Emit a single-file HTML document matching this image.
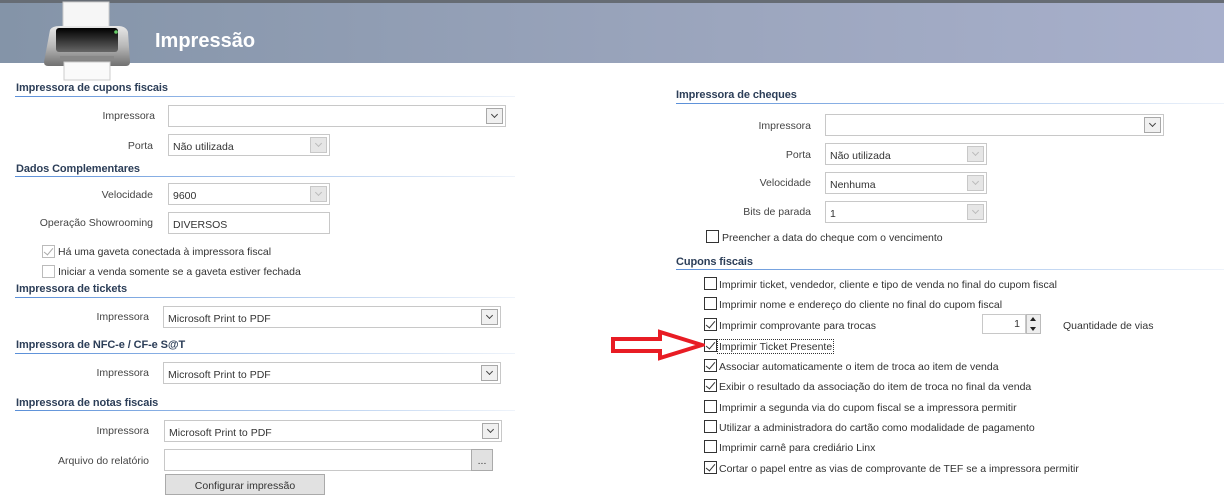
<!DOCTYPE html>
<html><head><meta charset="utf-8"><style>
*{margin:0;padding:0;box-sizing:border-box}
body{width:1224px;height:503px;overflow:hidden;background:#fff;position:relative;font-family:"Liberation Sans",sans-serif;font-size:10.5px;color:#333}
.a{position:absolute;white-space:nowrap}
.hdr{position:absolute;left:0;top:0;width:1224px;height:63px;background:linear-gradient(90deg,#8494a8,#9ca6be 60%,#a8b0cc);border-top:3px solid #666c74}
.title{position:absolute;left:155px;top:30px;color:#fff;font-weight:bold;font-size:20px}
.sec{position:absolute;font-weight:bold;font-size:11px;color:#2c3e58;letter-spacing:-.1px}
.line{position:absolute;height:1px;background:linear-gradient(90deg,#5a8fd8,#b8d0f0 60%,#eef3fa)}
.lbl{position:absolute;text-align:right;color:#444;margin-top:1px}
.sel{position:absolute;border:1px solid #c8c8c8;background:#fff;height:22px;padding:6px 0 0 4px;color:#333}
.sel i{position:absolute;right:2px;top:2px;width:17px;height:16px;border:1px solid #a8a8a8;background:#f0f0f0}
.sel i:after{content:"";position:absolute;left:5px;top:3px;width:4px;height:4px;border-right:1px solid #444;border-bottom:1px solid #444;transform:rotate(45deg)}
.sel.d i{background:#e6e6e6;border-color:#c8c8c8}
.sel.d i:after{border-color:#bbb}
.cb{position:absolute;width:13px;height:13px;border:1px solid #333;background:#fff}
.cb.c:after{content:"";position:absolute;left:3px;top:0px;width:4px;height:8px;border-right:1.5px solid #333;border-bottom:1.5px solid #333;transform:rotate(40deg)}
.cb.g{border-color:#bbb}.cb.g:after{border-color:#aaa}
.btn{position:absolute;border:1px solid #aaa;background:#e1e1e1;text-align:center;padding-top:5px;color:#333}
.t{margin-top:1px}
</style></head><body>
<div class="hdr"></div>
<div class="title">Impressão</div>
<svg class="a" style="left:40px;top:0" width="95" height="82" viewBox="0 0 95 82">
<defs><linearGradient id="b" x1="0" y1="0" x2="0" y2="1"><stop offset="0" stop-color="#e8e8e8"/><stop offset=".5" stop-color="#b8b8b8"/><stop offset="1" stop-color="#707070"/></linearGradient>
<linearGradient id="s" x1="0" y1="0" x2="0" y2="1"><stop offset="0" stop-color="#000"/><stop offset="1" stop-color="#666"/></linearGradient></defs>
<rect x="23" y="2" width="46" height="30" fill="#f6f6f6" stroke="#ccc"/>
<path d="M10 30 Q12 26 20 26 L78 26 Q86 26 88 32 L90 62 Q90 66 86 66 L8 66 Q4 66 4 62 Z" fill="url(#b)"/>
<rect x="16" y="28" width="62" height="24" rx="3" fill="url(#s)"/>
<circle cx="76" cy="32" r="1.8" fill="#6c6"/>
<rect x="20" y="56" width="54" height="4" fill="#888"/>
<rect x="24" y="62" width="46" height="18" fill="#fafafa" stroke="#ccc"/>
</svg>

<div class="sec" style="left:16px;top:82px">Impressora de cupons fiscais</div><div class="line" style="left:15px;top:96px;width:500px"></div>
<div class="lbl" style="left:40px;top:109px;width:115px">Impressora</div><div class="sel" style="left:168px;top:105px;width:338px"><i></i></div>
<div class="lbl" style="left:40px;top:139px;width:113px">Porta</div><div class="sel d" style="left:168px;top:134px;width:162px">Não utilizada<i></i></div>
<div class="sec" style="left:16px;top:163px">Dados Complementares</div><div class="line" style="left:15px;top:176px;width:500px"></div>
<div class="lbl" style="left:40px;top:188px;width:113px">Velocidade</div><div class="sel d" style="left:168px;top:183px;width:162px">9600<i></i></div>
<div class="lbl" style="left:20px;top:216px;width:133px">Operação Showrooming</div><div class="sel" style="left:168px;top:212px;width:162px">DIVERSOS</div>
<div class="cb c g" style="left:42px;top:245px"></div><div class="a t" style="left:58px;top:245px">Há uma gaveta conectada à impressora fiscal</div>
<div class="cb g" style="left:42px;top:265px"></div><div class="a t" style="left:58px;top:265px">Iniciar a venda somente se a gaveta estiver fechada</div>
<div class="sec" style="left:16px;top:283px">Impressora de tickets</div><div class="line" style="left:15px;top:297px;width:500px"></div>
<div class="lbl" style="left:30px;top:310px;width:119px">Impressora</div><div class="sel" style="left:163px;top:306px;width:338px">Microsoft Print to PDF<i></i></div>
<div class="sec" style="left:16px;top:339px">Impressora de NFC-e / CF-e S@T</div><div class="line" style="left:15px;top:353px;width:500px"></div>
<div class="lbl" style="left:30px;top:366px;width:119px">Impressora</div><div class="sel" style="left:163px;top:362px;width:338px">Microsoft Print to PDF<i></i></div>
<div class="sec" style="left:16px;top:397px">Impressora de notas fiscais</div><div class="line" style="left:15px;top:410px;width:500px"></div>
<div class="lbl" style="left:30px;top:424px;width:119px">Impressora</div><div class="sel" style="left:164px;top:420px;width:338px">Microsoft Print to PDF<i></i></div>
<div class="lbl" style="left:20px;top:454px;width:129px">Arquivo do relatório</div><div class="sel" style="left:164px;top:449px;width:308px"></div>
<div class="btn" style="left:471px;top:449px;width:22px;height:22px">...</div>
<div class="btn" style="left:165px;top:474px;width:160px;height:21px">Configurar impressão</div>

<div class="sec" style="left:676px;top:89px">Impressora de cheques</div><div class="line" style="left:676px;top:103px;width:548px"></div>
<div class="lbl" style="left:700px;top:119px;width:111px">Impressora</div><div class="sel" style="left:825px;top:114px;width:339px"><i></i></div>
<div class="lbl" style="left:700px;top:148px;width:111px">Porta</div><div class="sel d" style="left:825px;top:143px;width:162px">Não utilizada<i></i></div>
<div class="lbl" style="left:700px;top:176px;width:111px">Velocidade</div><div class="sel d" style="left:825px;top:172px;width:162px">Nenhuma<i></i></div>
<div class="lbl" style="left:700px;top:205px;width:111px">Bits de parada</div><div class="sel d" style="left:825px;top:201px;width:162px">1<i></i></div>
<div class="cb" style="left:706px;top:230px"></div><div class="a t" style="left:722px;top:231px">Preencher a data do cheque com o vencimento</div>
<div class="sec" style="left:676px;top:256px">Cupons fiscais</div><div class="line" style="left:676px;top:269px;width:548px"></div>

<div class="cb" style="left:704px;top:277px"></div><div class="a t" style="left:719px;top:278px">Imprimir ticket, vendedor, cliente e tipo de venda no final do cupom fiscal</div>
<div class="cb" style="left:704px;top:297px"></div><div class="a t" style="left:719px;top:298px">Imprimir nome e endereço do cliente no final do cupom fiscal</div>
<div class="cb c" style="left:704px;top:318px"></div><div class="a t" style="left:719px;top:319px">Imprimir comprovante para trocas</div>
<div class="sel" style="left:982px;top:314px;width:44px;height:20px;text-align:right;padding:3px 5px 0 0">1</div>
<div class="a" style="left:1026px;top:314px;width:15px;height:20px;border:1px solid #bbb;background:#eee"><div style="position:absolute;left:3px;top:2px;border:3px solid transparent;border-bottom:4px solid #222;border-top:0"></div><div style="position:absolute;left:3px;top:12px;border:3px solid transparent;border-top:4px solid #222;border-bottom:0"></div></div>
<div class="a t" style="left:1063px;top:319px">Quantidade de vias</div>
<div class="cb c" style="left:704px;top:339px"></div><div class="a" style="left:717px;top:339px;border:1px dotted #333;padding:1px 1px 0;height:15px">Imprimir Ticket Presente</div>
<div class="cb c" style="left:704px;top:359px"></div><div class="a t" style="left:719px;top:360px">Associar automaticamente o item de troca ao item de venda</div>
<div class="cb c" style="left:704px;top:379px"></div><div class="a t" style="left:719px;top:380px">Exibir o resultado da associação do item de troca no final da venda</div>
<div class="cb" style="left:704px;top:400px"></div><div class="a t" style="left:719px;top:401px">Imprimir a segunda via do cupom fiscal se a impressora permitir</div>
<div class="cb" style="left:704px;top:420px"></div><div class="a t" style="left:719px;top:421px">Utilizar a administradora do cartão como modalidade de pagamento</div>
<div class="cb" style="left:704px;top:440px"></div><div class="a t" style="left:719px;top:441px">Imprimir carnê para crediário Linx</div>
<div class="cb c" style="left:704px;top:461px"></div><div class="a t" style="left:719px;top:462px">Cortar o papel entre as vias de comprovante de TEF se a impressora permitir</div>

<svg class="a" style="left:610px;top:329px" width="95" height="32"><path d="M3 10 L50 10 L50 3 L92 16 L50 29 L50 22 L3 22 Z" fill="#fff" stroke="#e81c24" stroke-width="4" stroke-linejoin="miter"/></svg>
</body></html>
